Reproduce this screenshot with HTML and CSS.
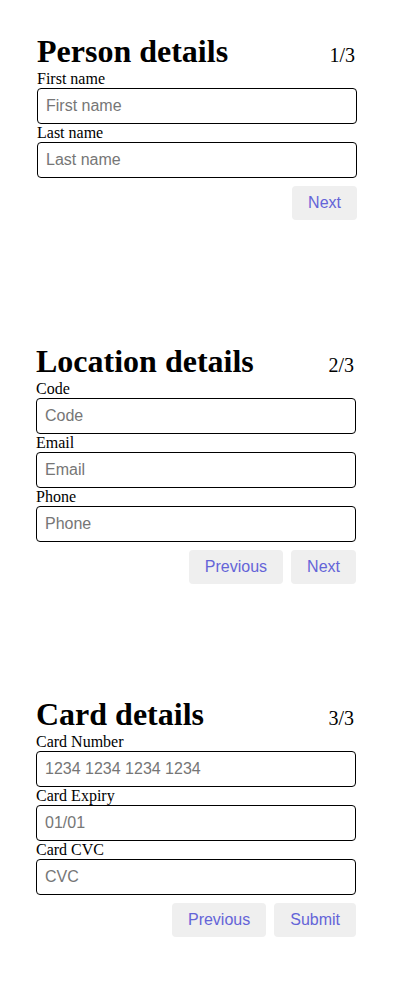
FILE: index.html
```html
<!DOCTYPE html>
<html lang="en">
<head>
<meta charset="utf-8">
<title>Multi-step form</title>
<link rel="stylesheet" href="styles.css">
</head>
<body>
<main class="page">
  <section class="step step--first">
    <header class="step-head">
      <h1 class="step-title">Person details</h1>
      <span class="step-count">1/3</span>
    </header>
    <label class="field-label" for="fn">First name</label>
    <input class="field-input" id="fn" type="text" placeholder="First name">
    <label class="field-label" for="ln">Last name</label>
    <input class="field-input" id="ln" type="text" placeholder="Last name">
    <div class="actions">
      <button class="btn" type="button">Next</button>
    </div>
  </section>

  <section class="step step--second">
    <header class="step-head">
      <h1 class="step-title">Location details</h1>
      <span class="step-count">2/3</span>
    </header>
    <label class="field-label" for="code">Code</label>
    <input class="field-input" id="code" type="text" placeholder="Code">
    <label class="field-label" for="email">Email</label>
    <input class="field-input" id="email" type="text" placeholder="Email">
    <label class="field-label" for="phone">Phone</label>
    <input class="field-input" id="phone" type="text" placeholder="Phone">
    <div class="actions">
      <button class="btn" type="button">Previous</button>
      <button class="btn" type="button">Next</button>
    </div>
  </section>

  <section class="step step--third">
    <header class="step-head">
      <h1 class="step-title">Card details</h1>
      <span class="step-count">3/3</span>
    </header>
    <label class="field-label" for="cn">Card Number</label>
    <input class="field-input" id="cn" type="text" placeholder="1234 1234 1234 1234">
    <label class="field-label" for="ce">Card Expiry</label>
    <input class="field-input" id="ce" type="text" placeholder="01/01">
    <label class="field-label" for="cvc">Card CVC</label>
    <input class="field-input" id="cvc" type="text" placeholder="CVC">
    <div class="actions">
      <button class="btn" type="button">Previous</button>
      <button class="btn" type="button">Submit</button>
    </div>
  </section>
</main>
</body>
</html>
```
FILE: styles.css
```css
html, body {
  margin: 0;
  padding: 0;
  background: #ffffff;
}

body {
  font-family: "Liberation Serif", "Times New Roman", serif;
  font-size: 16px;
  color: #000000;
}

.page {
  padding: 32.5px 0 0 36px;
  display: flex;
  flex-direction: column;
}

.step {
  width: 320px;
  display: flex;
  flex-direction: column;
}

.step--first {
  margin-left: 1px;
}

.step--second {
  margin-top: 123px;
}

.step--third {
  margin-top: 112.5px;
}

.step-head {
  display: flex;
  justify-content: space-between;
  align-items: baseline;
}

.step-title {
  margin: 0;
  font-size: 32px;
  font-weight: bold;
  line-height: normal;
}

.step-count {
  font-size: 20px;
  padding-right: 2px;
}

.field-label {
  display: block;
  font-size: 16px;
  line-height: normal;
  height: 18px;
}

.field-input {
  box-sizing: border-box;
  width: 100%;
  height: 36px;
  margin: 0;
  padding: 0 8px;
  border: 1px solid #000000;
  border-radius: 4px;
  font-family: "Liberation Sans", Arial, sans-serif;
  font-size: 16px;
  color: #000000;
  background: #ffffff;
  outline: none;
}

.field-input::placeholder {
  color: #767676;
}

.actions {
  display: flex;
  justify-content: flex-end;
  gap: 8px;
  margin-top: 8px;
}

.btn {
  height: 34px;
  padding: 0 16px;
  border: none;
  border-radius: 4px;
  background: #efefef;
  color: #6464d8;
  font-family: "Liberation Sans", Arial, sans-serif;
  font-size: 16px;
  cursor: pointer;
}
```
